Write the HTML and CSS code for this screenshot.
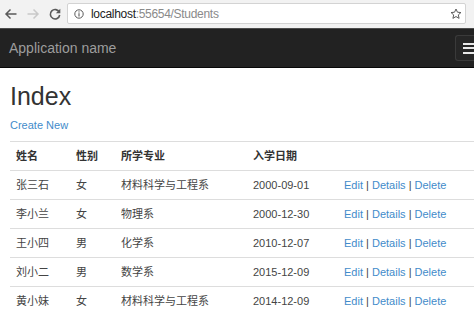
FILE: index.html
```html
<!DOCTYPE html>
<html>
<head>
<meta charset="utf-8">
<title>Index</title>
<link rel="stylesheet" href="styles.css">
</head>
<body>
<div class="chrome">
  <div class="navbtns">
    <svg class="nb" width="14" height="14" viewBox="0 0 14 14"><path d="M12.5 7H2M6.5 2.5L2 7l4.5 4.5" fill="none" stroke="#5a5a5a" stroke-width="1.5"/></svg>
    <svg class="nb" width="14" height="14" viewBox="0 0 14 14"><path d="M1.5 7H12M7.5 2.5L12 7l-4.5 4.5" fill="none" stroke="#c9c9c9" stroke-width="1.5"/></svg>
    <svg class="nb" width="14" height="14" viewBox="0 0 14 14"><path d="M11.3 5.2A4.7 4.7 0 1 0 11.7 8" fill="none" stroke="#5a5a5a" stroke-width="1.6"/><path d="M12.3 1.8v4.4H7.9z" fill="#5a5a5a"/></svg>
  </div>
  <div class="omnibox">
    <svg class="info" width="10" height="10" viewBox="0 0 10 10"><circle cx="5" cy="5" r="4.2" fill="none" stroke="#5a5a5a" stroke-width="1"/><rect x="4.45" y="4.2" width="1.1" height="3.3" fill="#5a5a5a"/><rect x="4.45" y="2.4" width="1.1" height="1.1" fill="#5a5a5a"/></svg>
    <span class="url"><span class="host">localhost</span>:55654/Students</span>
    <svg class="star" width="12" height="12" viewBox="0 0 12 12"><path d="M6 1l1.45 3.2 3.5.35-2.65 2.35.78 3.45L6 8.55 2.92 10.35l.78-3.45L1.05 4.55l3.5-.35z" fill="none" stroke="#5a5a5a" stroke-width="1" stroke-linejoin="round"/></svg>
  </div>
</div>
<nav class="navbar">
  <span class="brand">Application name</span>
  <span class="toggle"><i></i><i></i><i></i></span>
</nav>
<main class="content">
  <h1 class="title">Index</h1>
  <p class="create"><a href="#">Create New</a></p>
  <table class="table">
    <colgroup><col class="c1"><col class="c2"><col class="c3"><col class="c4"><col class="c5"></colgroup>
    <tr><th>姓名</th><th>性别</th><th>所学专业</th><th>入学日期</th><th></th></tr>
    <tr><td>张三石</td><td>女</td><td>材料科学与工程系</td><td>2000-09-01</td><td><a href="#">Edit</a> | <a href="#">Details</a> | <a href="#">Delete</a></td></tr>
    <tr><td>李小兰</td><td>女</td><td>物理系</td><td>2000-12-30</td><td><a href="#">Edit</a> | <a href="#">Details</a> | <a href="#">Delete</a></td></tr>
    <tr><td>王小四</td><td>男</td><td>化学系</td><td>2010-12-07</td><td><a href="#">Edit</a> | <a href="#">Details</a> | <a href="#">Delete</a></td></tr>
    <tr><td>刘小二</td><td>男</td><td>数学系</td><td>2015-12-09</td><td><a href="#">Edit</a> | <a href="#">Details</a> | <a href="#">Delete</a></td></tr>
    <tr><td>黄小妹</td><td>女</td><td>材料科学与工程系</td><td>2014-12-09</td><td><a href="#">Edit</a> | <a href="#">Details</a> | <a href="#">Delete</a></td></tr>
  </table>
</main>
</body>
</html>
```
FILE: styles.css
```css
html, body {
  margin: 0;
  padding: 0;
  background: #fff;
  overflow: hidden;
}
body {
  font-family: "Liberation Sans", "Noto Sans CJK SC", sans-serif;
  color: #333;
  width: 474px;
  height: 322px;
}
.chrome {
  height: 28px;
  background: #f2f2f2;
  display: flex;
  align-items: flex-start;
  box-sizing: border-box;
}
.navbtns {
  display: flex;
  gap: 8px;
  padding: 7px 0 0 4px;
  width: 67px;
  box-sizing: border-box;
}
.navbtns .nb { display: block; }
.omnibox {
  margin-top: 3px;
  width: 399px;
  height: 21px;
  background: #fff;
  border: 1px solid #d3d3d3;
  border-radius: 2px;
  box-sizing: border-box;
  display: flex;
  align-items: center;
  padding-left: 6px;
}
.info { display: block; margin-right: 7px; }
.url {
  font-size: 12px;
  letter-spacing: -0.3px;
  color: #8a8a8a;
  flex: 1;
}
.host { color: #222; }
.star { display: block; margin-right: 3px; }
.navbar {
  height: 40px;
  box-sizing: border-box;
  background: #222;
  border-top: 1px solid #4d4d4d;
  border-bottom: 1px solid #080808;
  display: flex;
  align-items: center;
  justify-content: space-between;
  padding-left: 9px;
}
.brand {
  font-size: 14px;
  color: #9d9d9d;
  line-height: 18px;
  margin-top: -1px;
}
.toggle {
  width: 19px;
  height: 26px;
  box-sizing: border-box;
  border: 1px solid #3a3a3a;
  border-right: 0;
  border-radius: 3px 0 0 3px;
  background: #262626;
  display: flex;
  flex-direction: column;
  justify-content: center;
  gap: 2.5px;
  padding-left: 7px;
  margin-top: 0px;
}
.toggle i {
  display: block;
  height: 2px;
  background: #e8e8e8;
}
.content {
  padding-left: 10px;
}
.title {
  font-size: 25px;
  font-weight: normal;
  line-height: 28px;
  margin: 14px 0 7px 0;
  color: #333;
}
.create {
  margin: 0 0 8px 0;
  font-size: 11px;
  line-height: 16px;
}
a {
  color: #428bca;
  text-decoration: none;
}
.table {
  width: 464px;
  border-collapse: collapse;
  border-spacing: 0;
  table-layout: fixed;
  font-size: 11px;
}
.c1 { width: 60px; }
.c2 { width: 45px; }
.c3 { width: 132px; }
.c4 { width: 91px; }
.table th, .table td {
  border-top: 1px solid #ddd;
  padding: 6px;
  line-height: 16px;
  text-align: left;
  vertical-align: top;
  white-space: nowrap;
}
.table th { font-weight: bold; color: #333; }
.table td { color: #444; }
```
